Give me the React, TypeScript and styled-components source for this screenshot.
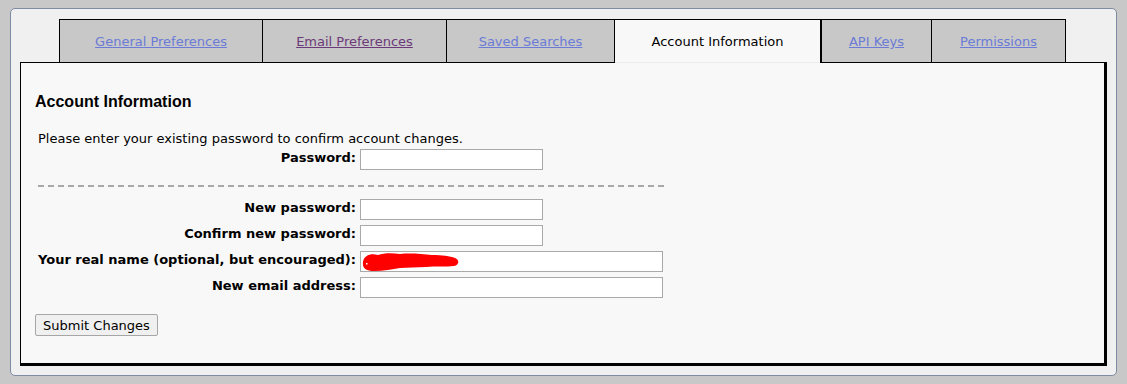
import * as React from "react";
import styled, { createGlobalStyle } from "styled-components";

const GlobalStyle = createGlobalStyle`
  html, body {
    margin: 0;
    padding: 0;
    background: #c8c8c8;
  }
  body {
    font-family: "DejaVu Sans", Verdana, sans-serif;
    font-size: 13px;
    color: #000;
  }
`;

interface ITab {
  label: string;
  width: number;
  visited?: boolean;
  active?: boolean;
}

const tabs: ITab[] = [
  { label: "General Preferences", width: 204 },
  { label: "Email Preferences", width: 185, visited: true },
  { label: "Saved Searches", width: 169 },
  { label: "Account Information", width: 208, active: true },
  { label: "API Keys", width: 111 },
  { label: "Permissions", width: 135 },
];

interface IField {
  label: string;
  width: number;
  redacted?: boolean;
}

const fields: IField[] = [
  { label: "New password:", width: 183 },
  { label: "Confirm new password:", width: 183 },
  { label: "Your real name (optional, but encouraged):", width: 303, redacted: true },
  { label: "New email address:", width: 303 },
];

const Scribble = () => (
  <svg width="98" height="18" viewBox="0 0 98 18">
    <path
      d="M1 9 C2 2 9 0 16 2 C22 0 30 0 38 1 C48 0 60 1 70 2 C80 2 88 3 93 5 C98 7 97 12 92 13 C84 14 74 13 64 14 C54 14 46 15 38 15 C30 16 22 18 12 18 C4 18 0 15 1 9 Z"
      fill="#ff0000"
    />
    <rect x="4" y="10" width="1.5" height="1.5" fill="#fff" />
  </svg>
);

const App: React.FunctionComponent = () => {
  return (
    <>
      <GlobalStyle />
      <Frame>
        <TabBar>
          {tabs.map(t => (
            <Tab key={t.label} $width={t.width} $active={t.active}>
              {t.active ? (
                <TabText>{t.label}</TabText>
              ) : (
                <TabLink href="#" $visited={t.visited}>
                  {t.label}
                </TabLink>
              )}
            </Tab>
          ))}
        </TabBar>
        <Panel>
          <Heading>Account Information</Heading>
          <Intro>Please enter your existing password to confirm account changes.</Intro>
          <FormGrid>
            <Label>Password:</Label>
            <Input $width={183} type="password" />
            <Divider />
            {fields.map(f => (
              <React.Fragment key={f.label}>
                <Label>{f.label}</Label>
                <InputWrap>
                  <Input $width={f.width} type="text" />
                  {f.redacted && (
                    <Redaction>
                      <Scribble />
                    </Redaction>
                  )}
                </InputWrap>
              </React.Fragment>
            ))}
          </FormGrid>
          <SubmitButton type="button">Submit Changes</SubmitButton>
        </Panel>
      </Frame>
    </>
  );
};

export default App;

const Frame = styled.div`
  margin: 8px 10px 0 10px;
  height: 368px;
  box-sizing: border-box;
  border: 1px solid #7d8ba3;
  border-radius: 5px;
  background: #f0f0f0;
  padding: 10px 9px 9px 9px;
  display: flex;
  flex-direction: column;
`;

const TabBar = styled.div`
  display: flex;
  padding-left: 39px;
  position: relative;
  z-index: 1;
`;

const Tab = styled.div<{ $width: number; $active?: boolean }>`
  width: ${p => p.$width}px;
  height: 43px;
  box-sizing: border-box;
  display: flex;
  align-items: center;
  justify-content: center;
  border: 1px solid #000;
  border-bottom: none;
  margin-right: -1px;
  padding-top: 1px;
  background: ${p => (p.$active ? "#f8f8f8" : "#c8c8c8")};
  ${p =>
    p.$active &&
    `
    border-right-width: 2px;
    height: 44px;
    margin-bottom: -1px;
    padding-bottom: 1px;
    box-shadow: inset 0 -1px 0 #ececec;
    position: relative;
    z-index: 2;
  `}
`;

const TabText = styled.span`
  font-size: 13px;
`;

const TabLink = styled.a<{ $visited?: boolean }>`
  color: ${p => (p.$visited ? "#6b3a78" : "#6b7bd6")};
  text-decoration: underline;
  font-size: 13px;
`;

const Panel = styled.div`
  flex: 1;
  box-sizing: border-box;
  background: #f8f8f8;
  border-style: solid;
  border-color: #000;
  border-width: 1px 3px 3px 1px;
  padding: 29px 0 0 14px;
`;

const Heading = styled.h2`
  margin: 0;
  font-family: "Liberation Sans", Arial, sans-serif;
  font-weight: bold;
  font-size: 16px;
  line-height: 20px;
`;

const Intro = styled.p`
  margin: 19px 0 0 3px;
  line-height: 16px;
`;

const FormGrid = styled.div`
  display: grid;
  grid-template-columns: 318px auto;
  row-gap: 5px;
  column-gap: 4px;
  align-items: center;
  margin: 2px 0 0 3px;
  width: 626px;
`;

const Label = styled.label`
  align-self: start;
  text-align: right;
  font-weight: bold;
  font-size: 13px;
  line-height: 17px;
  white-space: nowrap;
`;

const Divider = styled.hr`
  grid-column: 1 / -1;
  margin: 10px 0 7px 0;
  height: 0;
  border: none;
  border-top: 2px dashed #a8a8a8;
  width: 626px;
`;

const InputWrap = styled.div`
  position: relative;
  display: flex;
`;

const Input = styled.input<{ $width: number }>`
  width: ${p => p.$width}px;
  height: 21px;
  box-sizing: border-box;
  border: 1px solid #a9a9a9;
  background: #fff;
  padding: 1px 3px;
  margin: 0;
  font-family: "DejaVu Sans", Verdana, sans-serif;
  font-size: 13px;
`;

const Redaction = styled.div`
  position: absolute;
  left: 2px;
  top: 2px;
  line-height: 0;
  pointer-events: none;
`;

const SubmitButton = styled.button`
  margin-top: 16px;
  height: 22px;
  width: 123px;
  padding: 0;
  font-family: "DejaVu Sans", Verdana, sans-serif;
  font-size: 13px;
  color: #000;
  background: #f0f0f0;
  border: 1px solid #a6a6a6;
  border-radius: 2px;
`;
